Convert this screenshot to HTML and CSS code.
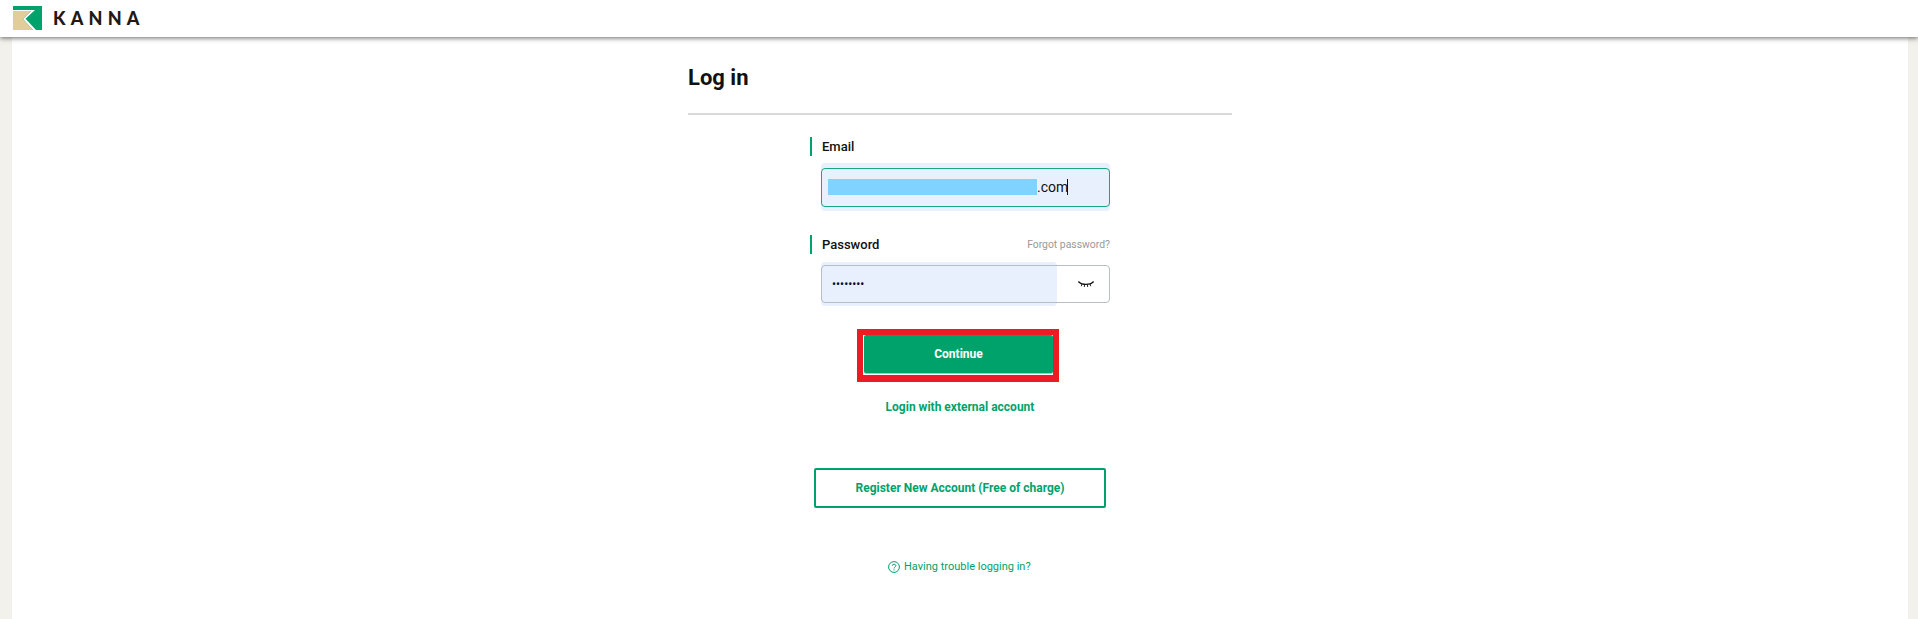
FILE: index.html
```html
<!DOCTYPE html>
<html lang="en">
<head>
    <meta charset="UTF-8">
    <meta name="viewport" content="width=device-width, initial-scale=1.0">
    <title>KANNA - Log in</title>
    <link rel="stylesheet" href="styles.css">
</head>
<body>
    <div class="header">
        <svg class="logo" width="29" height="24" viewBox="0 0 29 24">
            <rect width="29" height="24" fill="#00a26b"/>
            <polygon points="0,4 22,4 12.5,12.8 23,24 20,24 10,13 18,5 0,5" fill="#fff"/>
            <polygon points="0,5 18,5 10,13 20,24 0,24" fill="#e0cd98"/>
        </svg>
        <span class="brand">KANNA</span>
    </div>

    <div class="page">
        <div class="container">
            <h1>Log in</h1>

            <div class="form">
                <div class="field field-email">
                    <div class="label-row">
                        <label>Email</label>
                    </div>
                    <div class="input-wrap">
                        <div class="autofill">
                            <div class="input-box focused">
                                <span class="masked"></span><span class="value">.com</span><span class="caret"></span>
                            </div>
                        </div>
                    </div>
                </div>

                <div class="field field-password">
                    <div class="label-row">
                        <label>Password</label>
                        <a class="forgot">Forgot password?</a>
                    </div>
                    <div class="input-wrap">
                        <div class="autofill short"></div>
                        <div class="input-box password">
                            <span class="dots">••••••••</span>
                            <svg class="eye" width="16" height="7" viewBox="0 0 16 7" fill="none" stroke="#111" stroke-width="0.9">
                                <path d="M0.3 0.6 C1.5 1.2 2 2.4 4 2.9 C6.5 3.5 9.5 3.5 12 2.9 C14 2.4 14.5 1.2 15.7 0.6" stroke-width="1.3"/>
                                <path d="M4 3 L3.3 5.2 M6.6 3.4 L6.3 6 M9.4 3.4 L9.7 6 M12 3 L12.7 5.2"/>
                            </svg>
                        </div>
                    </div>
                </div>

                <div class="continue-wrap">
                    <button class="continue-btn">Continue</button>
                </div>

                <a class="external">Login with external account</a>
                <a class="register">Register New Account (Free of charge)</a>

                <a class="trouble">
                    <svg width="12" height="12" viewBox="0 0 12 12" fill="none" stroke="#00a26b" stroke-width="1">
                        <circle cx="6" cy="6" r="5.4"/>
                        <path d="M4.3 4.8 C4.3 2.6 7.8 2.7 7.8 4.7 C7.8 6 6 6 6 7.5"/>
                        <path d="M6 8.4 L6 9.4"/>
                    </svg>
                    Having trouble logging in?
                </a>
            </div>
        </div>
    </div>
</body>
</html>
```

FILE: styles.css
```css
* {
    margin: 0;
    padding: 0;
    box-sizing: border-box;
    font-family: 'Roboto', sans-serif;
}

html, body {
    height: 100%;
    overflow: hidden;
}

body {
    background: #f2f1ec;
    color: #111;
    display: flex;
    flex-direction: column;
}

.header {
    height: 37px;
    background: #fff;
    display: flex;
    align-items: center;
    padding-left: 13px;
    box-shadow: 0 1px 5px rgba(0, 0, 0, 0.6);
    position: relative;
    z-index: 1;
}

.logo {
    margin-top: -1px;
}

.brand {
    margin-left: 11px;
    margin-top: -1px;
    font-family: 'Lato', sans-serif;
    font-weight: 900;
    font-size: 18px;
    letter-spacing: 5.2px;
    color: #231815;
}

.page {
    flex: 1;
    margin-left: 12px;
    margin-right: 10px;
    background: #fff;
}

.container {
    width: 544px;
    margin-left: 676px;
}

h1 {
    height: 78px;
    padding-top: 28px;
    font-size: 22px;
    line-height: 26px;
    font-weight: 700;
    border-bottom: 2px solid #d9d9d9;
}

.form {
    display: flex;
    flex-direction: column;
    padding-left: 122px;
}

.field {
    width: 300px;
}

.field-email {
    margin-top: 22px;
}

.field-password {
    margin-top: 24px;
}

.label-row {
    height: 19px;
    border-left: 2px solid #00a26b;
    padding-left: 10px;
    display: flex;
    justify-content: space-between;
    align-items: center;
}

label {
    font-size: 13px;
    font-weight: 500;
}

.forgot {
    font-size: 10.4px;
    color: #999;
}

.input-wrap {
    margin-top: 8px;
    margin-left: 11px;
    width: 289px;
    height: 44px;
    display: flex;
    align-items: center;
    position: relative;
}

.field-email .input-wrap {
    margin-top: 7px;
    height: 48px;
}

.autofill {
    width: 289px;
    height: 48px;
    background: #e8f0fe;
    border-radius: 4px;
    display: flex;
    align-items: center;
}

.autofill.short {
    position: absolute;
    left: 0;
    top: 0;
    width: 236px;
    height: 44px;
}

.input-box {
    width: 289px;
    height: 38px;
    border: 1px solid #b9bdc4;
    border-radius: 4px;
    display: flex;
    align-items: center;
    padding-left: 6px;
    font-size: 14px;
    position: relative;
}

.input-box.focused {
    height: 39px;
    border-color: #1aa57a;
}

.masked {
    width: 209px;
    height: 16px;
    background: #80d2ff;
}

.caret {
    width: 1px;
    height: 16px;
    margin-left: -1px;
    background: #111;
}

.password {
    justify-content: space-between;
    padding-left: 10px;
    padding-right: 15px;
}

.dots {
    font-size: 12px;
}

.eye {
    margin-top: 1px;
}

.continue-wrap {
    margin-top: 23px;
    margin-left: 47px;
    width: 202px;
    height: 53px;
    border: 6px solid #ed1c24;
    border-bottom-width: 7px;
    background: #fff;
    padding: 0 0 2px 1px;
}

.continue-btn {
    display: block;
    width: 100%;
    height: 100%;
    border: none;
    border-radius: 2px;
    background: #00a26b;
    color: #fff;
    font-size: 12px;
    font-weight: 700;
    box-shadow: 0 1px 0 #bbb;
}

.external {
    margin-top: 17px;
    width: 300px;
    text-align: center;
    font-size: 12px;
    font-weight: 700;
    line-height: 16px;
    color: #00a26b;
}

.register {
    margin-top: 53px;
    margin-left: 4px;
    width: 292px;
    height: 40px;
    border: 2px solid #00a26b;
    border-radius: 2px;
    display: flex;
    align-items: center;
    justify-content: center;
    font-size: 12px;
    font-weight: 700;
    color: #00a26b;
}

.trouble {
    margin-top: 51px;
    margin-left: 78px;
    display: flex;
    align-items: center;
    gap: 4px;
    font-size: 11px;
    line-height: 16px;
    color: #00a26b;
}
```
